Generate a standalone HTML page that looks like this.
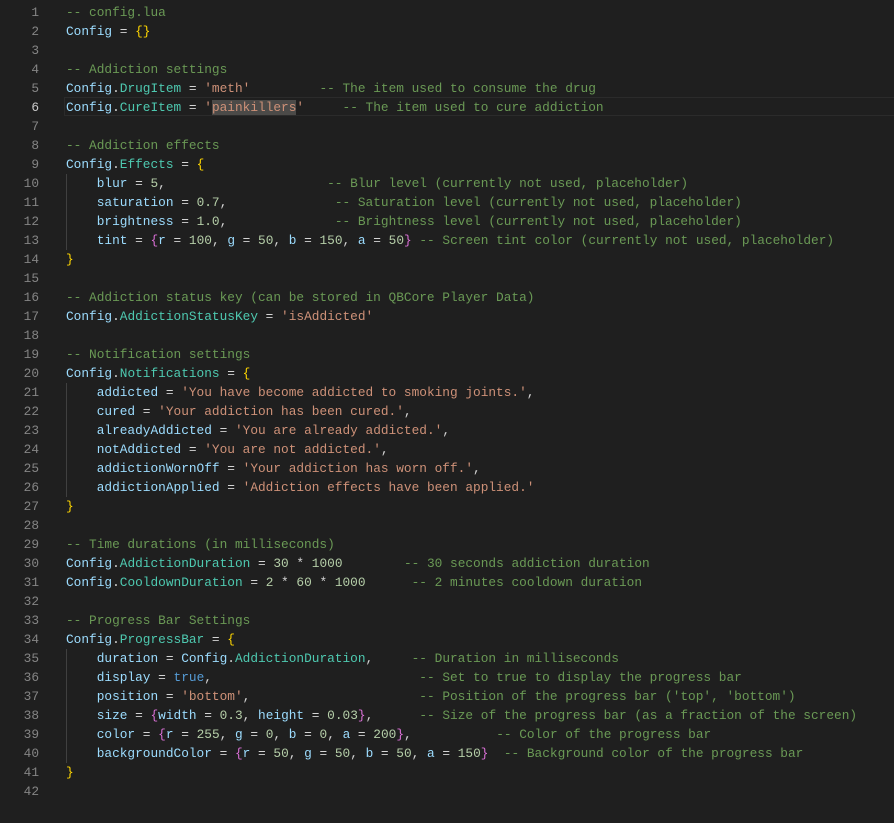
<!DOCTYPE html>
<html><head><meta charset="utf-8"><style>
html,body{margin:0;padding:0;background:#1f1f1f;width:894px;height:823px;overflow:hidden}
#ln{position:absolute;left:0;top:3px;width:39px;text-align:right;font:12.8px/19px "Liberation Mono",monospace;color:#858585}
#ln div{height:19px}
#code{position:absolute;left:66px;top:3px;font:12.8px/19px "Liberation Mono",monospace;color:#d4d4d4;white-space:pre}
#code div{height:19px}
.c{color:#6a9955}.v{color:#9cdcfe}.p{color:#4ec9b0}.s{color:#ce9178}.n{color:#b5cea8}.y{color:#ffd700}.m{color:#da70d6}.k{color:#569cd6}
.cur{position:absolute;left:64px;top:97px;width:830px;height:17px;border:1px solid #2b2b2b}
.g{position:absolute;left:66px;width:1px;background:#404040}
.sel{background:#4b4a48}
</style></head><body>
<div class="cur"></div>
<div class="g" style="top:174px;height:76px"></div>
<div class="g" style="top:383px;height:114px"></div>
<div class="g" style="top:649px;height:114px"></div>
<div id="ln"><div>1</div><div>2</div><div>3</div><div>4</div><div>5</div><div style="color:#cccccc">6</div><div>7</div><div>8</div><div>9</div><div>10</div><div>11</div><div>12</div><div>13</div><div>14</div><div>15</div><div>16</div><div>17</div><div>18</div><div>19</div><div>20</div><div>21</div><div>22</div><div>23</div><div>24</div><div>25</div><div>26</div><div>27</div><div>28</div><div>29</div><div>30</div><div>31</div><div>32</div><div>33</div><div>34</div><div>35</div><div>36</div><div>37</div><div>38</div><div>39</div><div>40</div><div>41</div><div>42</div></div>
<div id="code"><div><span class="c">-- config.lua</span></div><div><span class="v">Config</span> = <span class="y">{}</span></div><div> </div><div><span class="c">-- Addiction settings</span></div><div><span class="v">Config</span>.<span class="p">DrugItem</span> = <span class="s">'meth'</span>         <span class="c">-- The item used to consume the drug</span></div><div><span class="v">Config</span>.<span class="p">CureItem</span> = <span class="s">'<span class="sel">painkillers</span>'</span>     <span class="c">-- The item used to cure addiction</span></div><div> </div><div><span class="c">-- Addiction effects</span></div><div><span class="v">Config</span>.<span class="p">Effects</span> = <span class="y">{</span></div><div>    <span class="v">blur</span> = <span class="n">5</span>,                     <span class="c">-- Blur level (currently not used, placeholder)</span></div><div>    <span class="v">saturation</span> = <span class="n">0.7</span>,              <span class="c">-- Saturation level (currently not used, placeholder)</span></div><div>    <span class="v">brightness</span> = <span class="n">1.0</span>,              <span class="c">-- Brightness level (currently not used, placeholder)</span></div><div>    <span class="v">tint</span> = <span class="m">{</span><span class="v">r</span> = <span class="n">100</span>, <span class="v">g</span> = <span class="n">50</span>, <span class="v">b</span> = <span class="n">150</span>, <span class="v">a</span> = <span class="n">50</span><span class="m">}</span> <span class="c">-- Screen tint color (currently not used, placeholder)</span></div><div><span class="y">}</span></div><div> </div><div><span class="c">-- Addiction status key (can be stored in QBCore Player Data)</span></div><div><span class="v">Config</span>.<span class="p">AddictionStatusKey</span> = <span class="s">'isAddicted'</span></div><div> </div><div><span class="c">-- Notification settings</span></div><div><span class="v">Config</span>.<span class="p">Notifications</span> = <span class="y">{</span></div><div>    <span class="v">addicted</span> = <span class="s">'You have become addicted to smoking joints.'</span>,</div><div>    <span class="v">cured</span> = <span class="s">'Your addiction has been cured.'</span>,</div><div>    <span class="v">alreadyAddicted</span> = <span class="s">'You are already addicted.'</span>,</div><div>    <span class="v">notAddicted</span> = <span class="s">'You are not addicted.'</span>,</div><div>    <span class="v">addictionWornOff</span> = <span class="s">'Your addiction has worn off.'</span>,</div><div>    <span class="v">addictionApplied</span> = <span class="s">'Addiction effects have been applied.'</span></div><div><span class="y">}</span></div><div> </div><div><span class="c">-- Time durations (in milliseconds)</span></div><div><span class="v">Config</span>.<span class="p">AddictionDuration</span> = <span class="n">30</span> * <span class="n">1000</span>        <span class="c">-- 30 seconds addiction duration</span></div><div><span class="v">Config</span>.<span class="p">CooldownDuration</span> = <span class="n">2</span> * <span class="n">60</span> * <span class="n">1000</span>      <span class="c">-- 2 minutes cooldown duration</span></div><div> </div><div><span class="c">-- Progress Bar Settings</span></div><div><span class="v">Config</span>.<span class="p">ProgressBar</span> = <span class="y">{</span></div><div>    <span class="v">duration</span> = <span class="v">Config</span>.<span class="p">AddictionDuration</span>,     <span class="c">-- Duration in milliseconds</span></div><div>    <span class="v">display</span> = <span class="k">true</span>,                           <span class="c">-- Set to true to display the progress bar</span></div><div>    <span class="v">position</span> = <span class="s">'bottom'</span>,                      <span class="c">-- Position of the progress bar ('top', 'bottom')</span></div><div>    <span class="v">size</span> = <span class="m">{</span><span class="v">width</span> = <span class="n">0.3</span>, <span class="v">height</span> = <span class="n">0.03</span><span class="m">}</span>,      <span class="c">-- Size of the progress bar (as a fraction of the screen)</span></div><div>    <span class="v">color</span> = <span class="m">{</span><span class="v">r</span> = <span class="n">255</span>, <span class="v">g</span> = <span class="n">0</span>, <span class="v">b</span> = <span class="n">0</span>, <span class="v">a</span> = <span class="n">200</span><span class="m">}</span>,           <span class="c">-- Color of the progress bar</span></div><div>    <span class="v">backgroundColor</span> = <span class="m">{</span><span class="v">r</span> = <span class="n">50</span>, <span class="v">g</span> = <span class="n">50</span>, <span class="v">b</span> = <span class="n">50</span>, <span class="v">a</span> = <span class="n">150</span><span class="m">}</span>  <span class="c">-- Background color of the progress bar</span></div><div><span class="y">}</span></div><div> </div></div>
</body></html>
